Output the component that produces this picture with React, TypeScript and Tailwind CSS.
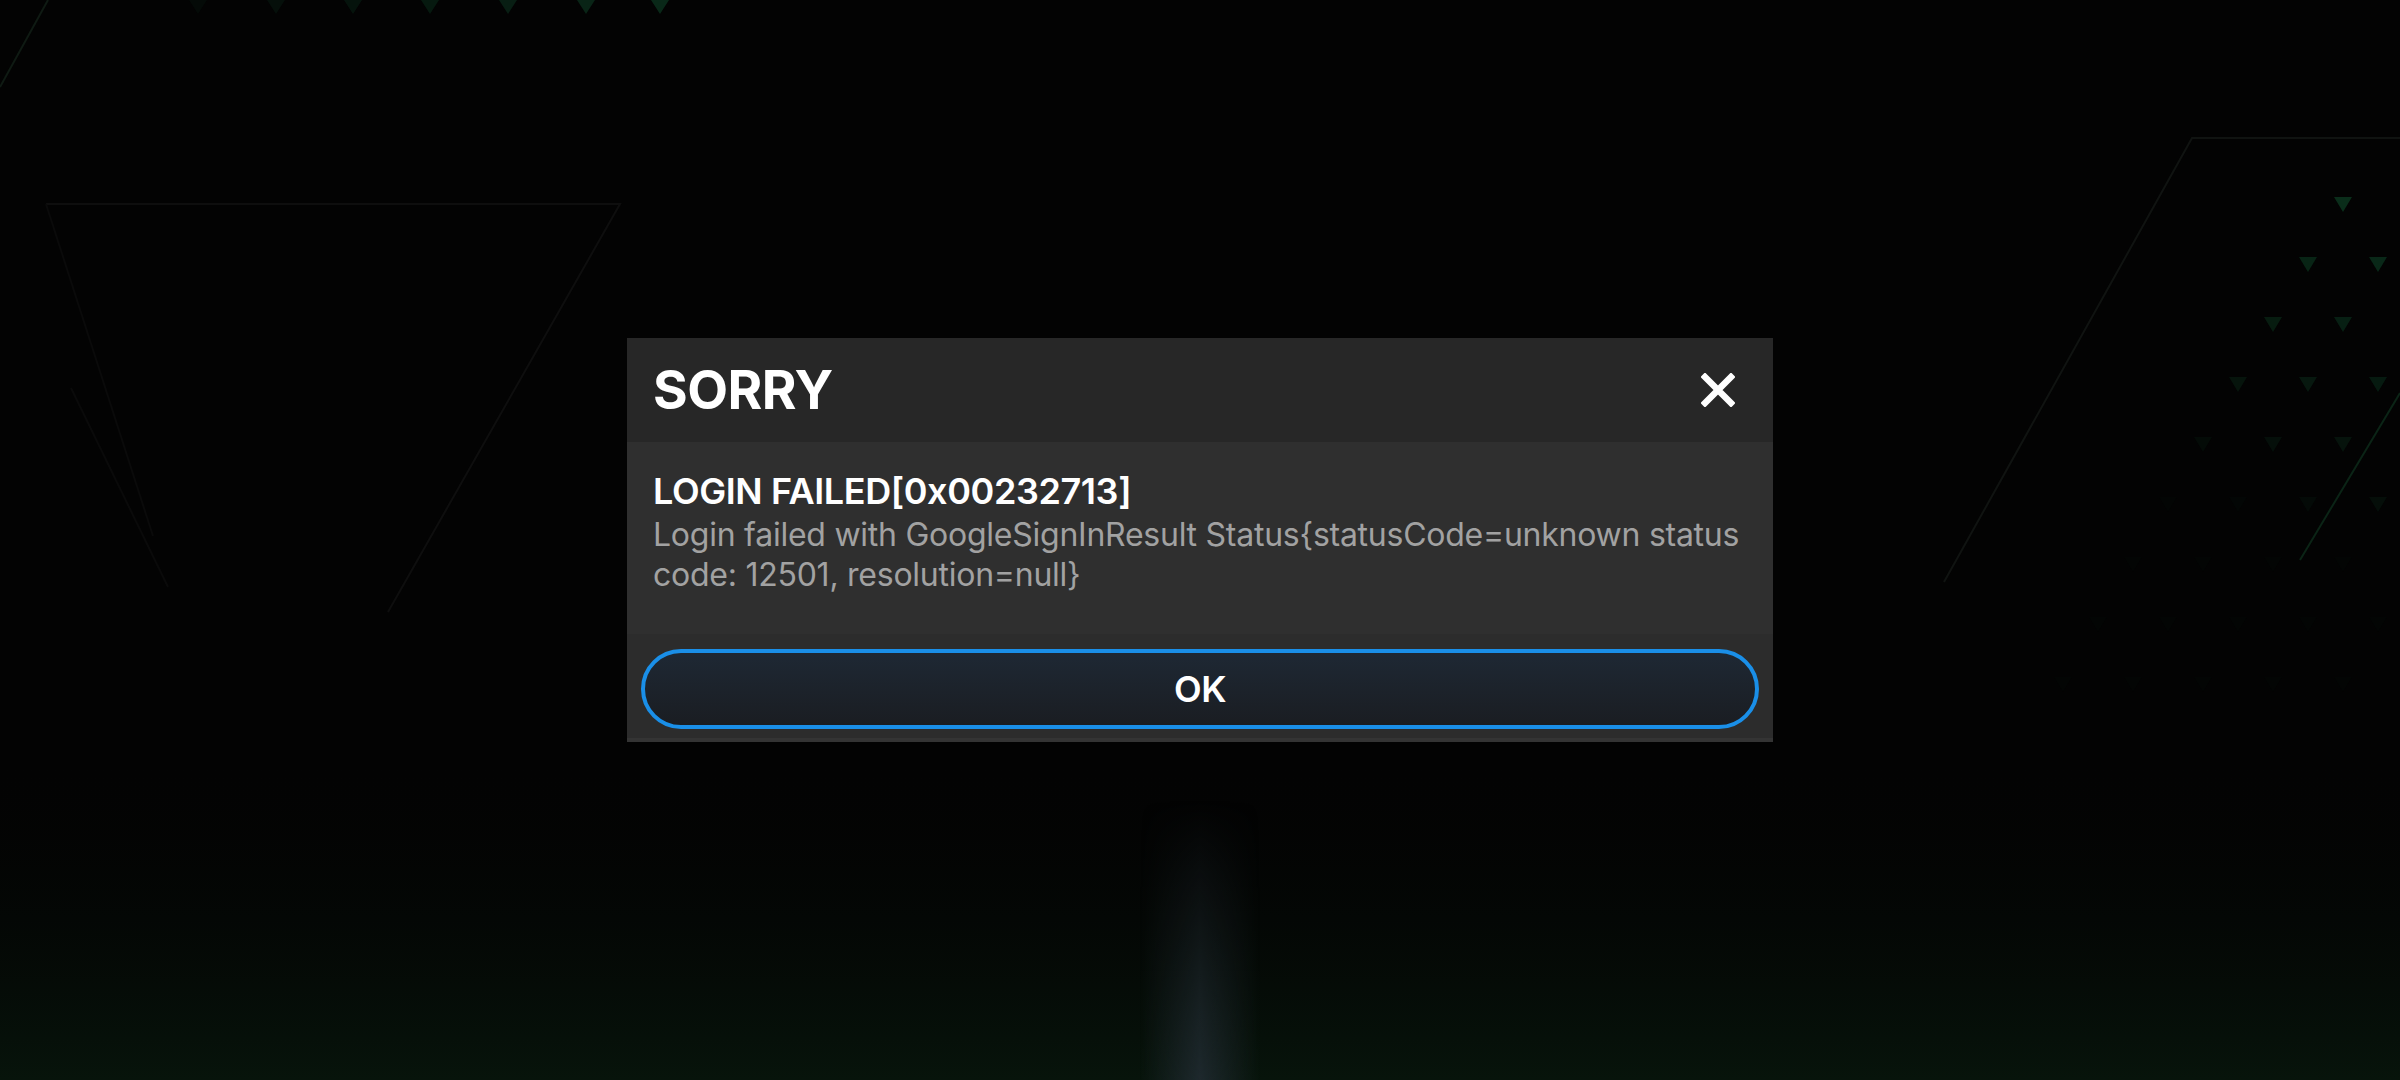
import { useMemo } from "react";

const font = { fontFamily: "Inter, 'Open Sans', sans-serif" };

function Backdrop() {
  // faint pitch graphics behind the modal
  const rightTris = useMemo(() => {
    const out: { x: number; y: number; o: number }[] = [];
    for (let r = 0; r < 9; r++) {
      const y = 205 + r * 60;
      const startX = 2343 - r * 35;
      for (let c = 0; c < r + 2; c++) {
        const x = startX + c * 70;
        if (x > 2400 || x < 1850) continue;
        out.push({ x, y, o: Math.max(0.05, 0.7 - r * 0.1 - (2400 - x) / 1200) });
      }
    }
    return out;
  }, []);

  const topTris = [198, 276, 353, 430, 508, 586, 660];

  return (
    <svg className="absolute inset-0 h-full w-full" viewBox="0 0 2400 1080" preserveAspectRatio="none">
      <defs>
        <linearGradient id="floor" x1="0" y1="0" x2="0" y2="1">
          <stop offset="0" stopColor="#030303" stopOpacity="0" />
          <stop offset="1" stopColor="#07140b" stopOpacity="1" />
        </linearGradient>
        <linearGradient id="streakX" x1="0" y1="0" x2="1" y2="0">
          <stop offset="0" stopColor="#222c33" stopOpacity="0" />
          <stop offset="0.5" stopColor="#222c33" stopOpacity="1" />
          <stop offset="1" stopColor="#222c33" stopOpacity="0" />
        </linearGradient>
        <linearGradient id="streakY" x1="0" y1="0" x2="0" y2="1">
          <stop offset="0" stopColor="#ffffff" stopOpacity="0" />
          <stop offset="0.5" stopColor="#ffffff" stopOpacity="0.4" />
          <stop offset="1" stopColor="#ffffff" stopOpacity="0.85" />
        </linearGradient>
        <mask id="streakMask">
          <rect x="1130" y="800" width="140" height="280" fill="url(#streakY)" />
        </mask>
      </defs>

      <rect x="0" y="760" width="2400" height="320" fill="url(#floor)" />
      <rect x="1140" y="800" width="120" height="280" fill="url(#streakX)" mask="url(#streakMask)" />

      {/* left inverted triangle outlines */}
      <polyline points="46,204 620,204 388,612" fill="none" stroke="#0e0e0e" strokeWidth="2" />
      <line x1="46" y1="204" x2="153" y2="536" stroke="#0a0a0a" strokeWidth="2" />
      <line x1="71" y1="388" x2="168" y2="587" stroke="#0a0a0a" strokeWidth="2" />
      <line x1="0" y1="87" x2="48" y2="0" stroke="#0f1a13" strokeWidth="2" />

      {topTris.map((x, i) => (
        <polygon
          key={x}
          points={`${x - 9},0 ${x + 9},0 ${x},14`}
          fill="#0c3520"
          opacity={0.15 + i * 0.1}
        />
      ))}

      {/* right side graphics */}
      <polyline points="2400,138 2192,138 1944,582" fill="none" stroke="#101311" strokeWidth="2" />
      <line x1="2400" y1="393" x2="2300" y2="560" stroke="#0b2416" strokeWidth="2" />
      {rightTris.map((t, i) => (
        <polygon
          key={i}
          points={`${t.x - 9},${t.y - 8} ${t.x + 9},${t.y - 8} ${t.x},${t.y + 7}`}
          fill="#0e4327"
          opacity={t.o}
        />
      ))}
    </svg>
  );
}

export default function App() {
  return (
    <div className="relative flex h-[1080px] w-[2400px] items-center justify-center overflow-hidden bg-[#030303]" style={font}>
      <Backdrop />

      <div className="relative flex w-[1146px] flex-col bg-[#2f2f2f]">
        {/* header */}
        <div className="flex h-[104px] items-center justify-between bg-[#272727] pl-[26px] pr-[35px]">
          <h1 className="text-[53px] font-bold leading-none tracking-[-0.5px] text-white">SORRY</h1>
          <button className="flex h-[40px] w-[40px] items-center justify-center">
            <svg width="34" height="34" viewBox="0 0 34 34">
              <path d="M4 4 L30 30 M30 4 L4 30" stroke="#ffffff" strokeWidth="6.5" strokeLinecap="square" />
            </svg>
          </button>
        </div>

        {/* body */}
        <div className="flex h-[192px] flex-col px-[26px] pt-[27px]">
          <p className="text-[36px] font-semibold leading-[44px] tracking-[-0.4px] text-white">LOGIN FAILED[0x00232713]</p>
          <p className="mt-[2px] text-[32px] leading-[40px] tracking-[-0.25px] text-[#a2a2a2]">
            Login failed with GoogleSignInResult Status{"{"}statusCode=unknown status code: 12501, resolution=null{"}"}
          </p>
        </div>

        {/* footer */}
        <div className="bg-[#2c2c2c] px-[14px] pb-[9px] pt-[15px]">
          <button className="flex h-[80px] w-full items-center justify-center rounded-full border-[4px] border-[#1a8fe8] bg-gradient-to-b from-[#1e2834] to-[#1a1d22]">
            <span className="text-[36px] font-semibold tracking-[-0.5px] text-white">OK</span>
          </button>
        </div>
        <div className="h-[4px] bg-[#343434]" />
      </div>
    </div>
  );
}
